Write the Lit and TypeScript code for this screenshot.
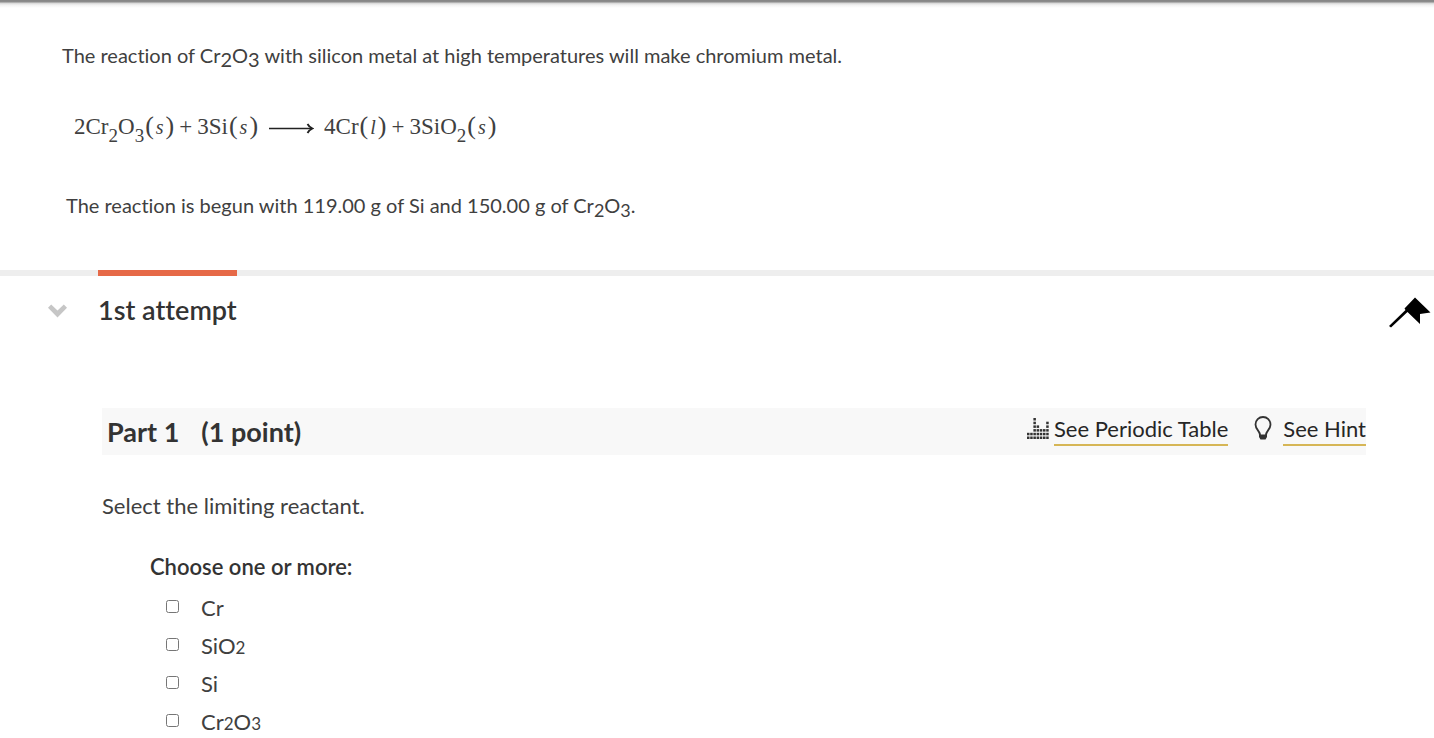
import { LitElement, html, css, svg } from "lit";
import { customElement } from "lit/decorators.js";

const sub = (n: string) => html`<sub>${n}</sub>`;
const state = (s: string) => html`<span class="state"><span class="paren">(</span><i>${s}</i><span class="paren">)</span></span>`;

// Number of lit cells in each column of the periodic-table glyph.
const COLUMNS = [2, 2, 6, 4, 3, 3, 5];
const OPTIONS = [
  { id: "cr", label: html`Cr` },
  { id: "sio2", label: html`SiO${sub("2")}` },
  { id: "si", label: html`Si` },
  { id: "cr2o3", label: html`Cr${sub("2")}O${sub("3")}` },
];

@customElement("app-root")
export class AppRoot extends LitElement {
  static styles = css`
    :host {
      display: block;
      font-family: Lato, "Liberation Sans", sans-serif;
      font-size: 22px;
      font-variant-ligatures: none;
      line-height: 30px;
      color: #404040;
      background: #fff;
    }
    h2, h3, p, ul, fieldset, legend { margin: 0; padding: 0; border: 0; font-size: inherit; }
    button { border: 0; padding: 0; background: none; font: inherit; font-variant-ligatures: none; color: inherit; cursor: pointer; }
    svg { display: block; }
    .question {
      padding: 40px 62px 50px;
      font-size: 20px;
      background: linear-gradient(#858585 0, #8d8d8d 2px, #d4d4d4 3px, #f2f2f2 5px, #fff 8px) no-repeat;
    }
    .question sub { font-size: 20px; line-height: 0; vertical-align: -4px; }
    .given { padding-left: 4px; }
    .given sub { font-size: 18px; }
    .equation {
      display: flex;
      align-items: baseline;
      margin: 39px 0 45px;
      padding-left: 12px;
      gap: 5px;
      font-family: "Liberation Serif", serif;
      font-size: 23px;
      line-height: 36px;
    }
    .equation sub { font-size: 19px; vertical-align: -8px; }
    .state i { font-size: 20px; padding: 0 2px; }
    .state { padding-left: 1px; }
    .paren { font-size: 26px; line-height: 0; }
    .arrow { margin: 0 5px; align-self: center; }
    .attempt { border-top: 6px solid #eee; }
    .attempt-head {
      display: flex;
      justify-content: space-between;
      align-items: flex-start;
      margin-top: -6px;
      padding: 0 3px 0 48px;
    }
    .toggle { display: flex; align-items: center; gap: 31px; text-align: left; }
    .title {
      border-top: 6px solid #e66947;
      padding: 17px 0 19px;
      font-size: 27px;
      line-height: 34px;
      font-weight: 600;
      color: #333;
    }
    .toggle svg { margin-top: 6px; }
    .pin { margin-top: 27px; }
    .part { margin: 62px 68px 0 102px; }
    .part-head {
      display: flex;
      justify-content: space-between;
      align-items: center;
      padding-left: 5px;
      min-height: 47px;
      background: #f8f8f8;
    }
    .part-title { display: flex; gap: 22px; font-size: 27px; font-weight: 700; color: #333; }
    .tools { display: flex; gap: 26px; padding-bottom: 4px; }
    .tool { display: flex; align-items: center; gap: 5px; color: #262626; text-decoration: none; }
    .tool.hint { gap: 11px; }
    .tool span { border-bottom: 2px solid #d6b656; }
    .tool svg { margin-bottom: 4px; }
    .prompt { margin-top: 36px; }
    .choices { margin: 31px 0 0 48px; }
    legend { font-weight: 600; color: #333; }
    .options { list-style: none; margin-top: 7px; }
    .option { display: flex; align-items: center; height: 38px; padding-left: 16px; gap: 22px; }
    .option input { width: 13px; height: 13px; margin: 0 0 4px; }
    .option sub { font-size: 17px; line-height: 0; vertical-align: baseline; }
  `;

  render() {
    return html`
      <section class="question">
        <p>The reaction of Cr${sub("2")}O${sub("3")} with silicon metal at high temperatures will make chromium metal.</p>
        <div class="equation">
          <span>2Cr${sub("2")}O${sub("3")}${state("s")}</span><span>+</span><span>3Si${state("s")}</span>
          <svg class="arrow" width="46" height="14" viewBox="0 0 46 14" fill="none" stroke="#222">
            <path d="M1 8.500H44" stroke-width="1.500" /><path d="M39.500 4Q41 7 44.500 8.500Q41 10 39.500 13" stroke-width="1.800" />
          </svg>
          <span>4Cr${state("l")}</span><span>+</span><span>3SiO${sub("2")}${state("s")}</span>
        </div>
        <p class="given">The reaction is begun with 119.00 g of Si and 150.00 g of Cr${sub("2")}O${sub("3")}.</p>
      </section>
      <section class="attempt">
        <header class="attempt-head">
          <button class="toggle" type="button" aria-expanded="true">
            <svg width="19" height="14" viewBox="0 0 19 14"><path d="M3.200 0.500L9.500 6.500L15.800 0.500L19 3.800L9.500 13.500L0 3.800Z" fill="#c6c6c6" /></svg>
            <span class="title">1st attempt</span>
          </button>
          <button class="pin" type="button" aria-label="Pin">
            <svg width="42" height="31" viewBox="0 0 42 31"><path d="M26 0.500L41.500 15.500L31 17V27L18.500 15L2 30.500L0 29L16.500 13L15.500 11.500Z" fill="#000" /></svg>
          </button>
        </header>
        <div class="part">
          <div class="part-head">
            <h3 class="part-title"><span>Part 1</span><span>(1 point)</span></h3>
            <nav class="tools">
              <a class="tool" href="#periodic-table">
                <svg width="22" height="22" viewBox="0 0 22 22" fill="#333">
                  ${COLUMNS.map((n, c) => Array.from({ length: n }, (_, r) => svg`<rect x=${c * 3.2} y=${19.5 - r * 3.7} width="2.500" height="2.500" />`))}
                </svg>
                <span>See Periodic Table</span>
              </a>
              <a class="tool hint" href="#hint">
                <svg width="18" height="24" viewBox="0 0 18 24">
                  <path d="M6 19C6 15 1.500 13.500 1.500 8.500A7.500 7.500 0 0 1 16.500 8.500C16.500 13.500 12 15 12 19" fill="none" stroke="#333" stroke-width="1.800" />
                  <path d="M5 18.500H13V21L11.500 23.500H6.500L5 21Z" fill="#333" />
                </svg>
                <span>See Hint</span>
              </a>
            </nav>
          </div>
          <p class="prompt">Select the limiting reactant.</p>
          <fieldset class="choices">
            <legend>Choose one or more:</legend>
            <ul class="options">
              ${OPTIONS.map((o) => html`<li class="option"><input type="checkbox" id=${o.id} /><label for=${o.id}>${o.label}</label></li>`)}
            </ul>
          </fieldset>
        </div>
      </section>
    `;
  }
}
